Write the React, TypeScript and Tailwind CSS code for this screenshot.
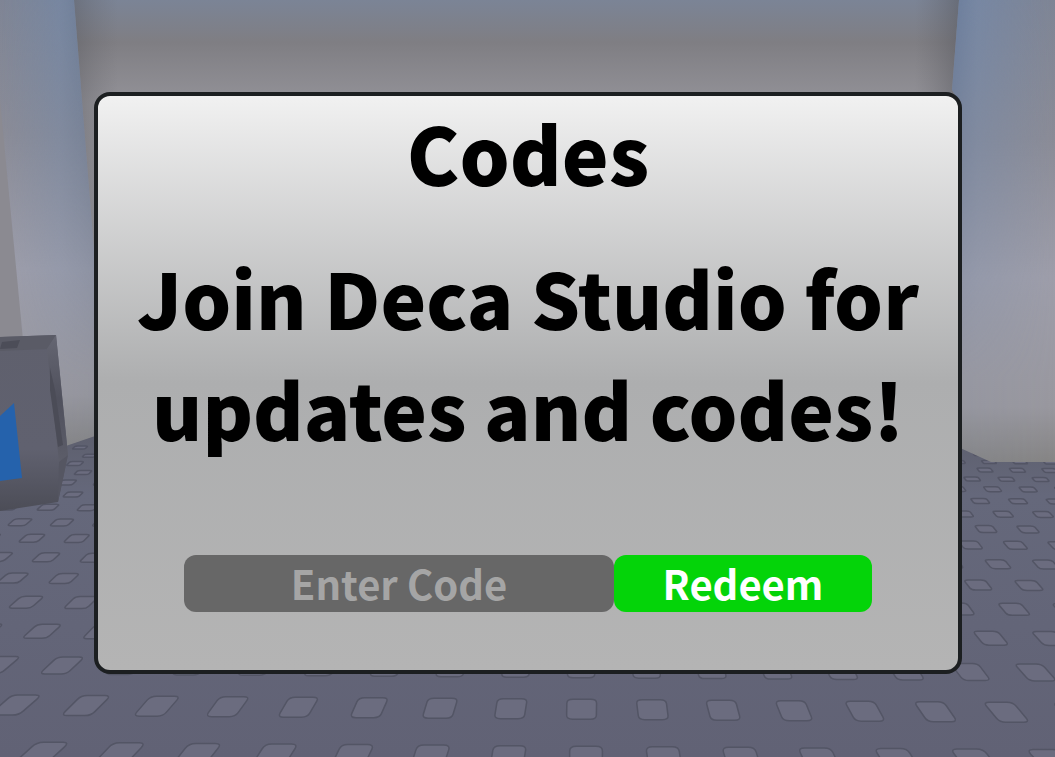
import { FormEvent, useState } from 'react';

interface TileRow {
  y: number;
  x: number;
  gap: number;
  height: number;
}

// y is measured at the left edge, rows drop slightly towards the right
const tileRows: TileRow[] = [
  { y: 447, x: 80, gap: 30, height: 3 },
  { y: 455, x: 90, gap: 31, height: 3 },
  { y: 463, x: 75, gap: 32.5, height: 4 },
  { y: 472, x: 83, gap: 34.2, height: 4 },
  { y: 482, x: 67, gap: 35.6, height: 5 },
  { y: 494, x: 73, gap: 37.8, height: 5 },
  { y: 507, x: 48, gap: 39.8, height: 6 },
  { y: 522, x: 20, gap: 42, height: 7 },
  { y: 538, x: 32, gap: 44.7, height: 8 },
  { y: 557, x: 46, gap: 47.6, height: 9 },
  { y: 578, x: 13, gap: 50.8, height: 10 },
  { y: 602, x: 26, gap: 54.9, height: 12 },
  { y: 631, x: 42, gap: 59.3, height: 14 },
  { y: 665, x: 62, gap: 64.9, height: 17 },
  { y: 705, x: 86, gap: 70.8, height: 20 },
  { y: 754, x: 40, gap: 78, height: 24 },
];

function tilePath(cx: number, cy: number, width: number, height: number) {
  const skew = (height * (590 - cx)) / 1000;
  const w = width / 2;
  const h = height / 2;
  const corners = [
    [cx - w + skew, cy - h],
    [cx + w + skew, cy - h],
    [cx + w - skew, cy + h],
    [cx - w - skew, cy + h],
  ];
  const mix = (a: number[], b: number[], t: number) =>
    `${a[0] + (b[0] - a[0]) * t} ${a[1] + (b[1] - a[1]) * t}`;
  return (
    corners
      .map((corner, i) => {
        const prev = corners[(i + 3) % 4];
        const next = corners[(i + 1) % 4];
        return `${i === 0 ? 'M' : 'L'}${mix(corner, prev, 0.2)} Q${corner[0]} ${
          corner[1]
        } ${mix(corner, next, 0.2)}`;
      })
      .join(' ') + 'Z'
  );
}

function FloorTiles() {
  const tiles: string[] = [];
  tileRows.forEach((row) => {
    const start = row.x - Math.ceil((row.x + 30) / row.gap) * row.gap;
    for (let x = start; x < 1100; x += row.gap) {
      tiles.push(tilePath(x, row.y + x * 0.0072, row.gap * 0.42, row.height));
    }
  });
  return (
    <g fill="#6b6c7f" stroke="#535565" strokeWidth="1.5">
      {tiles.map((d) => (
        <path key={d} d={d} />
      ))}
    </g>
  );
}

function Scene() {
  return (
    <svg
      className="absolute inset-0 size-full"
      viewBox="0 0 1055 757"
      preserveAspectRatio="none"
      aria-hidden="true"
    >
      <defs>
        <linearGradient id="wall" x1="0" y1="0" x2="0" y2="1">
          <stop offset="0" stopColor="#7b8496" />
          <stop offset="0.09" stopColor="#7f7e83" />
          <stop offset="0.22" stopColor="#939298" />
          <stop offset="1" stopColor="#9a9aa2" />
        </linearGradient>
        <linearGradient id="wallShade" x1="0" y1="0" x2="1" y2="0">
          <stop offset="0" stopColor="#55565c" stopOpacity="0.4" />
          <stop offset="0.05" stopColor="#66666c" stopOpacity="0" />
          <stop offset="0.95" stopColor="#66666c" stopOpacity="0" />
          <stop offset="1" stopColor="#55565c" stopOpacity="0.5" />
        </linearGradient>
        <linearGradient id="pillar" x1="0" y1="0" x2="0" y2="1">
          <stop offset="0" stopColor="#7f8595" />
          <stop offset="0.3" stopColor="#8b8c97" />
          <stop offset="0.6" stopColor="#9e9eaa" />
          <stop offset="0.88" stopColor="#99989f" />
          <stop offset="1" stopColor="#868585" />
        </linearGradient>
        <linearGradient id="leftBlue" x1="0" y1="0" x2="1" y2="0">
          <stop offset="0" stopColor="#7188aa" stopOpacity="0" />
          <stop offset="0.6" stopColor="#7188aa" stopOpacity="0.6" />
          <stop offset="1" stopColor="#61728d" stopOpacity="0.9" />
        </linearGradient>
        <linearGradient id="rightBlue" x1="0" y1="0" x2="1" y2="0">
          <stop offset="0" stopColor="#667b9d" stopOpacity="0.9" />
          <stop offset="0.25" stopColor="#7389ab" stopOpacity="0.7" />
          <stop offset="1" stopColor="#7188aa" stopOpacity="0" />
        </linearGradient>
        <linearGradient id="fade" x1="0" y1="0" x2="0" y2="1">
          <stop offset="0" stopColor="white" stopOpacity="0.9" />
          <stop offset="0.35" stopColor="white" stopOpacity="0.55" />
          <stop offset="0.8" stopColor="white" stopOpacity="0.1" />
        </linearGradient>
        <mask id="fadeMask">
          <rect width="1055" height="470" fill="url(#fade)" />
        </mask>
        <linearGradient id="floor" x1="0" y1="0" x2="0" y2="1">
          <stop offset="0" stopColor="#5d5f6d" />
          <stop offset="0.2" stopColor="#65687b" />
          <stop offset="1" stopColor="#616275" />
        </linearGradient>
        <linearGradient id="crate" x1="0" y1="0" x2="0" y2="1">
          <stop offset="0" stopColor="#5f606d" />
          <stop offset="0.65" stopColor="#60616f" />
          <stop offset="1" stopColor="#4c4d57" />
        </linearGradient>
        <linearGradient id="crateSide" x1="0" y1="0" x2="0" y2="1">
          <stop offset="0" stopColor="#656672" />
          <stop offset="0.5" stopColor="#50515d" />
          <stop offset="1" stopColor="#5c5d69" />
        </linearGradient>
      </defs>

      <rect width="1055" height="470" fill="url(#wall)" />
      <rect x="74" width="885" height="470" fill="url(#wallShade)" />

      <path d="M0 430H1055V757H0Z" fill="url(#floor)" />
      <FloorTiles />

      <path d="M0 0H74L98 300V435L60 448H0Z" fill="url(#pillar)" />
      <g mask="url(#fadeMask)">
        <path d="M0 0H74L98 300V435L60 448H0Z" fill="url(#leftBlue)" />
      </g>
      <path d="M0 100L23 340H0Z" fill="#8b8a91" />

      <path
        d="M959 0H1055V462H991L958 447V100L952 90Z"
        fill="url(#pillar)"
      />
      <g mask="url(#fadeMask)">
        <path d="M959 0H1055V462H991L958 447V100L952 90Z" fill="url(#rightBlue)" />
      </g>

      {/* crate with the blue emblem */}
      <path d="M0 337L56 335L68 455L58 502L0 511Z" fill="url(#crate)" />
      <path d="M0 337L56 335L47 349L0 351Z" fill="#5a5b66" />
      <path d="M2 342L20 340L17 348L0 349Z" fill="#4c4d58" />
      <path d="M56 335L47 349L59 462L68 455Z" fill="url(#crateSide)" />
      <path d="M50 368L55 390L63 445L58 447L50 390Z" fill="#4b4c57" />
      <path d="M59 462L68 455L58 502Z" fill="#555662" />
      <path d="M0 416L14 403L22 478L0 481Z" fill="#2562ac" />
    </svg>
  );
}

export default function App() {
  const [code, setCode] = useState('');

  const handleSubmit = (e: FormEvent) => {
    e.preventDefault();
    setCode('');
  };

  return (
    <div className="relative flex min-h-screen items-center overflow-hidden bg-[#626376] pt-2 pr-[93px] pl-[94px] font-['Noto_Sans_CJK_SC',sans-serif]">
      <Scene />
      <main className="relative w-full rounded-2xl border-4 border-[#1c1f21] bg-linear-to-b from-[#f1f1f1] via-[#adaeaf] to-[#b4b4b4] pb-[58px] text-center leading-[111px] font-black text-black">
        <h1 className="text-[79px] leading-[111px]">Codes</h1>
        <p className="mt-[34px] text-[77px] leading-[111px]">
          Join Deca Studio for updates and codes!
        </p>
        <form
          onSubmit={handleSubmit}
          className="mx-auto mt-[92px] flex h-[57px] w-4/5 text-[40px] leading-[55px] font-semibold"
        >
          <input
            type="text"
            aria-label="Enter Code"
            placeholder="Enter Code"
            value={code}
            onChange={(e) => setCode(e.target.value)}
            className="h-full min-w-0 flex-5 rounded-xl bg-[#676767] text-center text-white outline-none placeholder:text-[#a5a5a5]"
          />
          <button
            type="submit"
            className="h-full flex-3 rounded-xl bg-[#04d409] text-white"
          >
            Redeem
          </button>
        </form>
      </main>
    </div>
  );
}
